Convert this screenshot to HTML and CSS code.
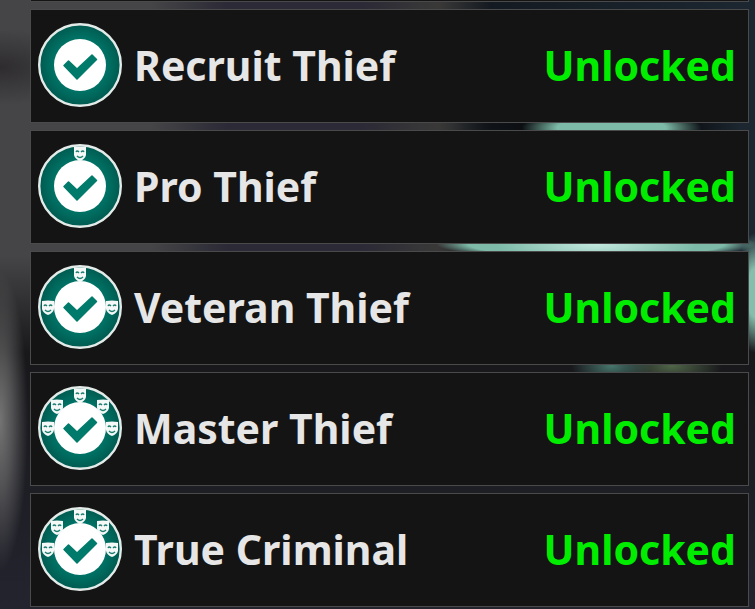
FILE: index.html
```html
<!DOCTYPE html>
<html lang="en">
<head>
	<meta charset="utf-8">
	<title>Thief Ranks</title>
	<link rel="stylesheet" href="styles.css">
</head>
<body>
	<svg class="defs" aria-hidden="true">
		<defs>
			<radialGradient id="ring">
				<stop offset="0" stop-color="#008675"/>
				<stop offset="0.65" stop-color="#007265"/>
				<stop offset="1" stop-color="#005a50"/>
			</radialGradient>
			<g id="mask">
				<path d="M-6-7Q0-8 6-7V1Q5 5 0 7Q-5 5-6 1Z" fill="#f4f8f7"/>
				<path d="M-4-2Q-3-4-1-2M1-2Q3-4 4-2M-3 2Q0 5 3 2" fill="none" stroke="#1d7d70" stroke-width="1.4"/>
			</g>
			<g id="badge">
				<circle cx="42" cy="42" r="40.8" fill="url(#ring)" stroke="#e3ebe9" stroke-width="2.4"/>
				<circle cx="42" cy="42" r="26" fill="#fff"/>
				<path d="M26 42.5L30.5 38 39 46 54 32 58.5 36.5 39 56Z" fill="#007b6b" stroke="#007b6b" stroke-width="1.5" stroke-linejoin="round"/>
			</g>
		</defs>
	</svg>

	<div class="row previous"></div>
	<ul class="ranks">
		<li class="row">
			<svg class="icon" viewBox="0 0 84 84" aria-hidden="true"><use href="#badge"/></svg>
			<span class="name">Recruit Thief</span>
			<span class="status">Unlocked</span>
		</li>
		<li class="row">
			<svg class="icon" viewBox="0 0 84 84" aria-hidden="true">
				<use href="#badge"/>
				<use href="#mask" x="42" y="10"/>
			</svg>
			<span class="name">Pro Thief</span>
			<span class="status">Unlocked</span>
		</li>
		<li class="row">
			<svg class="icon" viewBox="0 0 84 84" aria-hidden="true">
				<use href="#badge"/>
				<use href="#mask" x="42" y="10"/>
				<use href="#mask" x="10" y="43"/>
				<use href="#mask" x="74" y="43"/>
			</svg>
			<span class="name">Veteran Thief</span>
			<span class="status">Unlocked</span>
		</li>
		<li class="row">
			<svg class="icon" viewBox="0 0 84 84" aria-hidden="true">
				<use href="#badge"/>
				<use href="#mask" x="42" y="10"/>
				<use href="#mask" x="19" y="21"/>
				<use href="#mask" x="65" y="21"/>
				<use href="#mask" x="10" y="43"/>
				<use href="#mask" x="74" y="43"/>
			</svg>
			<span class="name">Master Thief</span>
			<span class="status">Unlocked</span>
		</li>
		<li class="row">
			<svg class="icon" viewBox="0 0 84 84" aria-hidden="true">
				<use href="#badge"/>
				<use href="#mask" x="42" y="10"/>
				<use href="#mask" x="19" y="21"/>
				<use href="#mask" x="65" y="21"/>
				<use href="#mask" x="10" y="43"/>
				<use href="#mask" x="74" y="43"/>
			</svg>
			<span class="name">True Criminal</span>
			<span class="status">Unlocked</span>
		</li>
	</ul>
</body>
</html>
```
FILE: styles.css
```css
* {
	box-sizing: border-box;
}

/* out of focus scene behind the list */
body {
	margin: 0;
	padding: 0 6px 3px 30px;
	min-height: 100vh;
	font-family: "Noto Sans", sans-serif;
	font-weight: 700;
	background:
		radial-gradient(ellipse 28px 150px at 0 69%, #747474 0%, #74747499 45%, #74747400 100%),
		radial-gradient(ellipse 90px 38px at 0 11%, #2e2c2f 0%, #2e2c2f00 100%),
		radial-gradient(ellipse 90px 20px at 81% 21%, #7dbba8 60%, #7dbba800 100%),
		radial-gradient(ellipse 100px 20px at 79% 40%, #c3e9df 0%, #c3e9df00 100%),
		radial-gradient(ellipse 160px 16px at 79% 40%, #7dbba8 80%, #7dbba800 100%),
		radial-gradient(ellipse 20px 60px at 100% 48%, #83bfac 40%, #83bfac00 100%),
		radial-gradient(ellipse 40px 20px at 81% 60%, #46756c 0%, #46756c00 100%),
		radial-gradient(ellipse 50px 20px at 89% 60%, #4f6548 0%, #4f654800 100%),
		linear-gradient(90deg, #0000 60%, #0b0d10 70%, #0b0d10 90%, #0000 98%) 0 120px / 100% 12px no-repeat,
		linear-gradient(#0000 42%, #18181b 58%, #23242e 100%),
		linear-gradient(90deg, #454547 20%, #2b2a36 30%, #2b2a36 48%, #3a3938 58%, #141a21 65%, #1c2731 100%);
}

.defs {
	position: absolute;
	width: 0;
	height: 0;
}

.ranks {
	display: flex;
	flex-direction: column;
	gap: 7px;
	margin: 7px 0 0;
	padding: 0;
	list-style: none;
}

.row {
	display: flex;
	align-items: center;
	height: 114px;
	padding: 0 12px 2px 7px;
	border: 1px solid #4a4a4a;
	background: #141414;
}

/* bottom edge of the row scrolled off the top */
.previous {
	height: 2px;
	padding: 0;
	border-top: 0;
}

.icon {
	flex: none;
	width: 84px;
	height: 84px;
	margin-right: 12px;
}

.name,
.status {
	font-size: 41px;
	line-height: 56px;
}

.name {
	flex: 1;
	color: #e6e6e6;
}

.status {
	color: #00ed00;
}
```
